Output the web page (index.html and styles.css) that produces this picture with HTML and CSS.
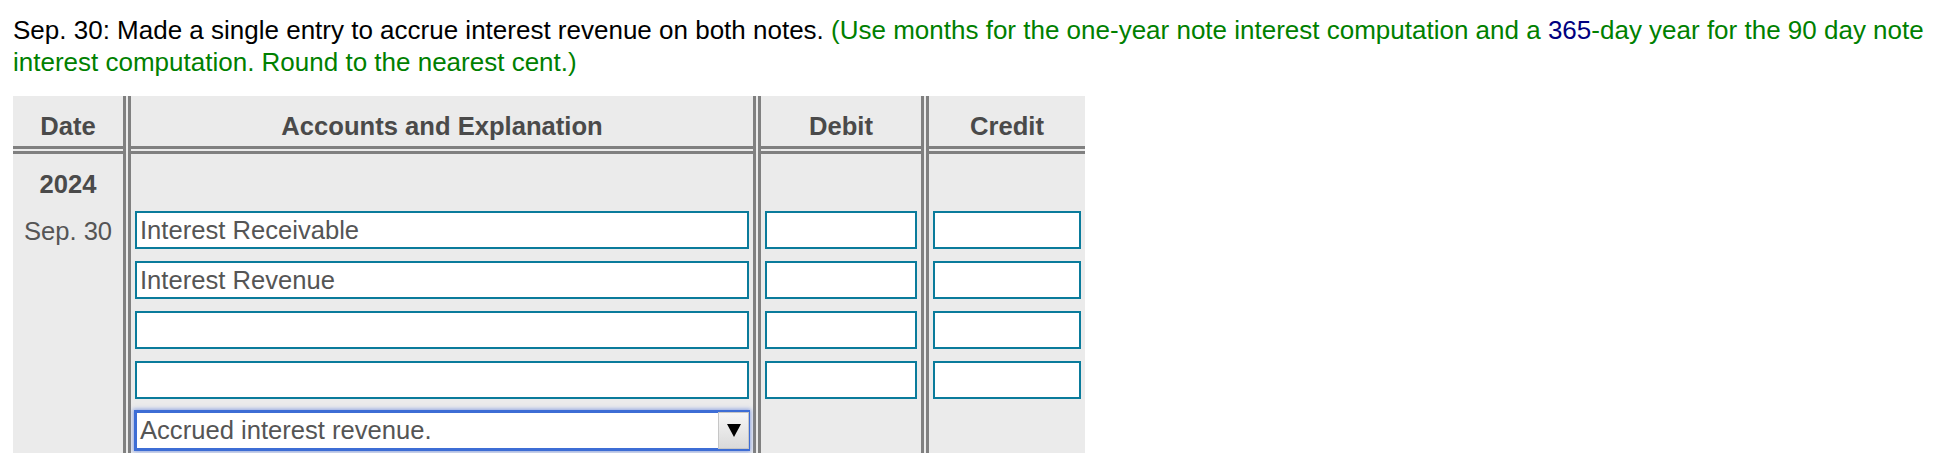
FILE: index.html
```html
<!DOCTYPE html>
<html lang="en">
<head>
<meta charset="utf-8">
<title>Journal entry</title>
<link rel="stylesheet" href="styles.css">
</head>
<body>
<p class="prompt">Sep. 30: Made a single entry to accrue interest revenue on both notes. <span class="hint">(Use months for the one-year note interest computation and a <span class="num">365</span>-day year for the 90 day note<br>interest computation. Round to the nearest cent.)</span></p>

<div class="journal">
  <div class="col col-date">
    <div class="th">Date</div>
    <div class="tb">
      <div class="year">2024</div>
      <div class="date-cell">Sep. 30</div>
    </div>
  </div>
  <div class="col col-acct">
    <div class="th">Accounts and Explanation</div>
    <div class="tb">
      <div class="field">Interest Receivable</div>
      <div class="field">Interest Revenue</div>
      <div class="field"></div>
      <div class="field"></div>
      <div class="select"><span class="select-text">Accrued interest revenue.</span><span class="arrow"><span class="tri"></span></span></div>
    </div>
  </div>
  <div class="col col-debit">
    <div class="th">Debit</div>
    <div class="tb">
      <div class="field"></div>
      <div class="field"></div>
      <div class="field"></div>
      <div class="field"></div>
    </div>
  </div>
  <div class="col col-credit">
    <div class="th">Credit</div>
    <div class="tb">
      <div class="field"></div>
      <div class="field"></div>
      <div class="field"></div>
      <div class="field"></div>
    </div>
  </div>
</div>
</body>
</html>
```
FILE: styles.css
```css
html, body {
  background: #ffffff;
}

body {
  margin: 13px;
  font-family: "Liberation Sans", Arial, sans-serif;
  color: #000000;
}

.prompt {
  margin: 0 0 18px 0;
  padding-top: 1px;
  font-size: 26px;
  line-height: 32px;
  white-space: nowrap;
}

.hint {
  color: #008000;
}

.num {
  color: #000080;
}

.journal {
  display: flex;
  width: 1072px;
  background: #ebebeb;
  font-size: 25.6px;
  color: #555555;
}

.col {
  display: flex;
  flex-direction: column;
  box-sizing: border-box;
  border-right: 8px double #808080;
}

.col-date { width: 118px; }
.col-acct { width: 630px; }
.col-debit { width: 168px; }
.col-credit { width: 156px; border-right: none; }

.th {
  box-sizing: border-box;
  height: 58px;
  padding-top: 14px;
  line-height: 32px;
  text-align: center;
  font-weight: bold;
  color: #4a4a4a;
  border-bottom: 8px double #808080;
}

.tb {
  height: 299px;
  box-sizing: border-box;
  padding-top: 57px;
}

.col-date .tb {
  padding-top: 0;
  text-align: center;
}

.year {
  box-sizing: border-box;
  height: 57px;
  padding-top: 14px;
  line-height: 32px;
  font-weight: bold;
  color: #4a4a4a;
}

.date-cell {
  box-sizing: border-box;
  height: 38px;
  padding-top: 3px;
  line-height: 35px;
}

.field {
  box-sizing: border-box;
  height: 38px;
  margin: 0 4px 12px 4px;
  padding-left: 3px;
  border: 2px solid #0a7b9b;
  background: #ffffff;
  line-height: 34px;
  white-space: nowrap;
  overflow: hidden;
}

.select {
  display: flex;
  box-sizing: border-box;
  height: 41px;
  margin: -1px 3px 0 3px;
  border: 3px solid #3d6dd5;
  background: #ffffff;
  box-shadow: 0 0 4px 1px rgba(70, 110, 220, 0.55);
}

.select-text {
  flex: 1;
  padding-left: 3px;
  line-height: 35px;
  white-space: nowrap;
}

.arrow {
  display: flex;
  align-items: center;
  justify-content: center;
  box-sizing: border-box;
  width: 31px;
  margin: -1px -2px 0 0;
  height: 37px;
  border: 1px solid #c6c6c6;
  background: linear-gradient(#f6f6f6, #dadada);
}

.tri {
  width: 0;
  height: 0;
  border-left: 7px solid transparent;
  border-right: 7px solid transparent;
  border-top: 13px solid #000000;
}
```
